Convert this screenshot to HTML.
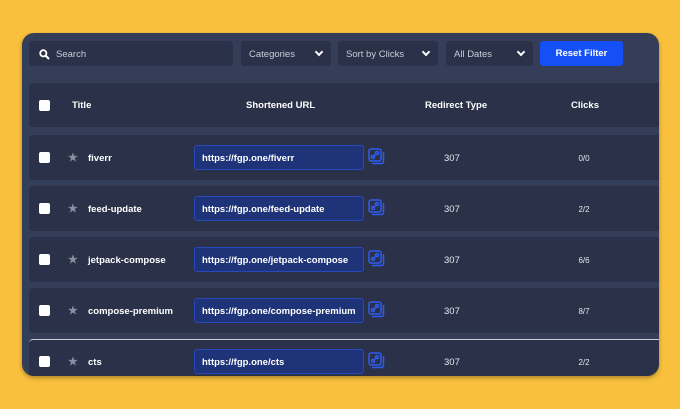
<!DOCTYPE html><html><head><style>
*{margin:0;padding:0;box-sizing:border-box}
body{width:680px;height:409px;background:#f8c03c;font-family:"Liberation Sans",sans-serif;overflow:hidden;position:relative}
.panel{position:absolute;left:22px;top:33px;width:637px;height:343px;background:#353e59;border-radius:12px;overflow:hidden;box-shadow:0 2px 4px rgba(0,0,0,.3)}
.box{position:absolute;top:8px;height:25px;background:#2a3149;border-radius:3px;color:#c9cdd8;font-size:9.5px;line-height:27px;padding-left:8px}
.chev{position:absolute;right:9px;top:8px;width:6px;height:6px;border-right:2px solid #fff;border-bottom:2px solid #fff;transform:rotate(45deg)}
.btn{position:absolute;left:518px;top:8px;width:83px;height:25px;background:#1450f5;border-radius:3px;color:#fff;font-weight:bold;font-size:9.5px;text-align:center;line-height:26px}
.row{position:absolute;left:7px;width:640px;background:#2a3149;border-radius:4px;color:#fff;font-size:9.5px;font-weight:bold}
.cb{position:absolute;left:10px;width:11px;height:11px;background:#fff;border-radius:2px}
.t{position:absolute;line-height:14px}
.star{position:absolute;left:39px;color:#8b90a0;font-size:11px}
.url{position:absolute;left:165px;width:170px;height:25px;background:#1e3378;border:1px solid #2748b8;border-radius:3px;line-height:25px;padding-left:7px}
.cp{position:absolute;left:339px;width:17px;height:17px}
</style></head><body>
<div class="panel">
<div class="box" style="left:7px;width:204px;padding-left:27px"><svg style="position:absolute;left:10px;top:8px" width="11" height="11" viewBox="0 0 11 11"><circle cx="4.3" cy="4.3" r="3.1" fill="none" stroke="#fff" stroke-width="1.8"/><path d="M6.5 6.5L10 10" stroke="#fff" stroke-width="2"/></svg>Search</div>
<div class="box" style="left:219px;width:90px">Categories<span class="chev"></span></div>
<div class="box" style="left:316px;width:100px">Sort by Clicks<span class="chev"></span></div>
<div class="box" style="left:424px;width:87px">All Dates<span class="chev"></span></div>
<div class="btn">Reset Filter</div>
<div class="row" style="top:50px;height:44px">
<div class="cb" style="top:17px"></div>
<div class="t" style="left:43px;top:16px">Title</div>
<div class="t" style="left:217px;top:16px">Shortened URL</div>
<div class="t" style="left:396px;top:16px">Redirect Type</div>
<div class="t" style="left:542px;top:16px">Clicks</div>
</div>
<div id="rows"></div>
</div>
<script>
var d=[["fiverr","0/0",102],["feed-update","2/2",153],["jetpack-compose","6/6",204],["compose-premium","8/7",255],["cts","2/2",306]];
var h="";d.forEach(function(r,i){var last=i==4;h+='<div class="row" style="top:'+r[2]+'px;height:45px;'+(last?'border-top:1px solid #c8ccd6;':'')+'"><div class="cb" style="top:'+(last?16:17)+'px"></div><div class="star" style="top:'+(last?15:16)+'px">★</div><div class="t" style="left:59px;top:'+(last?16:17)+'px">'+r[0]+'</div><div class="url" style="top:'+(last?9:10)+'px">https://fgp.one/'+r[0]+'</div><svg class="cp" style="top:'+(last?12:13)+'px" viewBox="0 0 17 17"><rect x="1" y="1" width="12" height="12" rx="2" fill="none" stroke="#2f5cf0" stroke-width="1.5"/><path d="M15.5 4v9.5a2 2 0 0 1-2 2H4" fill="none" stroke="#2f5cf0" stroke-width="1.5"/><path d="M4.5 9.5l5-5" stroke="#2f5cf0" stroke-width="1.3"/><circle cx="5" cy="9" r="1.7" fill="none" stroke="#2f5cf0" stroke-width="1.2"/><circle cx="9" cy="5" r="1.7" fill="none" stroke="#2f5cf0" stroke-width="1.2"/></svg><div class="t" style="left:415px;top:'+(last?16:17)+'px;font-weight:normal;color:#e6e8ee">307</div><div class="t" style="left:543px;width:24px;text-align:center;top:'+(last?16:17)+'px;font-weight:normal;font-size:8px;color:#e6e8ee">'+r[1]+'</div></div>'});
document.getElementById("rows").innerHTML=h;
</script>
</body></html>
